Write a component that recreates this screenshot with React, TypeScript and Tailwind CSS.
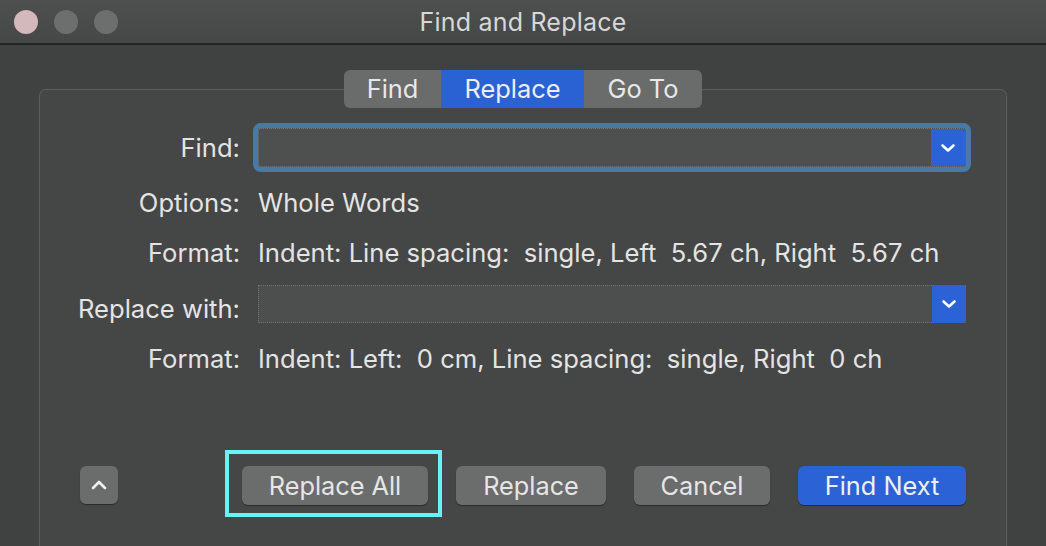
import React from "react";

function ChevronDown() {
  return (
    <svg width="16" height="10" viewBox="0 0 16 10" fill="none">
      <polyline points="2.5,2.5 8,7.5 13.5,2.5" stroke="#ffffff" strokeWidth="2.6" strokeLinecap="round" strokeLinejoin="round" />
    </svg>
  );
}

function ChevronUp() {
  return (
    <svg width="16" height="10" viewBox="0 0 16 10" fill="none">
      <polyline points="2,8 8,2 14,8" stroke="#f0f0f0" strokeWidth="2.6" strokeLinecap="round" strokeLinejoin="round" />
    </svg>
  );
}

export default function App() {
  return (
    <div
      className="w-[1046px] h-[546px] bg-[#404141] flex flex-col overflow-hidden text-[#e4e4e4]"
      style={{ fontFamily: "Inter, 'Noto Sans', sans-serif" }}
    >
      {/* Title bar */}
      <div className="h-[45px] shrink-0 grid grid-cols-[1fr_auto_1fr] items-center bg-gradient-to-b from-[#4e4f4f] to-[#464747] border-b-2 border-[#232323]">
        <div className="flex items-center gap-[16px] pl-[14px]">
          <div className="w-[24px] h-[24px] rounded-full bg-[#d3b9bb]" />
          <div className="w-[24px] h-[24px] rounded-full bg-[#6d6e6e]" />
          <div className="w-[24px] h-[24px] rounded-full bg-[#6d6e6e]" />
        </div>
        <div className="pt-[2px] text-[25px] text-[#d8d8d8] tracking-[0.2px] leading-none">Find and Replace</div>
        <div />
      </div>

      {/* Body */}
      <div className="flex-1 px-[39px] pt-[44px]">
        <div className="h-full rounded-t-[7px] border border-b-0 border-[#5c5d5d] bg-[#454646] flex flex-col">
          {/* Tabs */}
          <div className="flex justify-center -mt-[20px]">
            <div className="flex h-[38px] rounded-[6px] bg-[#6a6b6b] overflow-hidden text-[25.4px] leading-none">
              <div className="w-[97px] flex items-center justify-center text-[#e8e8e8]">Find</div>
              <div className="w-[143px] flex items-center justify-center bg-[#2a62d4] text-[#eeeeee]">Replace</div>
              <div className="w-[118px] flex items-center justify-center text-[#e8e8e8]">Go To</div>
            </div>
          </div>

          {/* Form rows */}
          <div className="flex flex-col text-[25.6px] leading-none">
            {/* Find */}
            <div className="mt-[20px] h-[39px] flex items-center">
              <div className="w-[200px] text-right">Find:</div>
              <div className="ml-[18px] w-[708px] h-[39px] rounded-[3px] bg-[#4e4f4f] border border-dotted border-[#777] shadow-[0_0_0_5px_#4a78a7] flex justify-end">
                <div className="w-[34px] h-full bg-[#2b63d6] rounded-r-[3px] flex items-center justify-center">
                  <ChevronDown />
                </div>
              </div>
            </div>

            {/* Options */}
            <div className="mt-[16px] h-[40px] flex items-center">
              <div className="w-[200px] text-right">Options:</div>
              <div className="ml-[18px] whitespace-pre">Whole Words</div>
            </div>

            {/* Format */}
            <div className="mt-[10px] h-[40px] flex items-center">
              <div className="w-[200px] text-right">Format:</div>
              <div className="ml-[18px] whitespace-pre">Indent: Line spacing:  single, Left  5.67 ch, Right  5.67 ch</div>
            </div>

            {/* Replace with */}
            <div className="mt-[12px] h-[38px] flex items-center">
              <div className="w-[200px] text-right pt-[9px]">Replace with:</div>
              <div className="ml-[18px] w-[708px] h-[38px] bg-[#4d4e4e] border border-dotted border-[#6e6e6e] flex justify-end">
                <div className="w-[34px] -my-px -mr-px bg-[#2b63d6] rounded-r-[4px] flex items-center justify-center">
                  <ChevronDown />
                </div>
              </div>
            </div>

            {/* Format 2 */}
            <div className="mt-[16px] h-[40px] flex items-center">
              <div className="w-[200px] text-right">Format:</div>
              <div className="ml-[18px] whitespace-pre">Indent: Left:  0 cm, Line spacing:  single, Right  0 ch</div>
            </div>
          </div>

          {/* Buttons */}
          <div className="mt-[71px] flex items-start text-[25.3px] leading-none text-[#e6e6e6]">
            <button className="ml-[40px] mt-[16px] w-[38px] h-[38px] rounded-[6px] bg-[#6b6c6c] shadow-[0_1px_1px_#2a2a2a] flex items-center justify-center">
              <ChevronUp />
            </button>
            <div className="ml-[107px] border-[4px] border-[#66f2f7] pl-[13px] pr-[10px] pt-[12px] pb-[8px]">
              <button className="w-[186px] h-[39px] rounded-[6px] bg-[#6b6c6c] shadow-[0_1px_1px_#2a2a2a] flex items-center justify-center">
                Replace All
              </button>
            </div>
            <button className="ml-[14px] mt-[16px] w-[150px] h-[39px] rounded-[6px] bg-[#6b6c6c] shadow-[0_1px_1px_#2a2a2a] flex items-center justify-center">
              Replace
            </button>
            <button className="ml-[28px] mt-[16px] w-[136px] h-[39px] rounded-[6px] bg-[#6b6c6c] shadow-[0_1px_1px_#2a2a2a] flex items-center justify-center">
              Cancel
            </button>
            <button className="ml-[28px] mt-[16px] w-[168px] h-[39px] rounded-[6px] bg-[#2b63d6] shadow-[0_1px_1px_#2a2a2a] flex items-center justify-center text-[#f0f0f0]">
              Find Next
            </button>
          </div>
        </div>
      </div>
    </div>
  );
}
